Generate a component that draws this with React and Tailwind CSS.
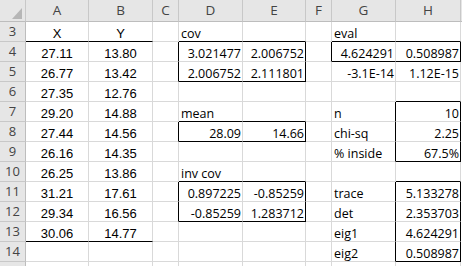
import React from "react";

const COLS = ["A", "B", "C", "D", "E", "F", "G", "H"];
const WIDTHS = ["w-[63px]", "w-[64px]", "w-[26px]", "w-[64px]", "w-[63px]", "w-[26px]", "w-[64px]", "w-[65px]"];

const DATA = {
  3: { A: ["X", "c"], B: ["Y", "c"], D: ["cov", "l"], G: ["eval", "l"] },
  4: { A: ["27.11", "c"], B: ["13.80", "c"], D: ["3.021477", "r"], E: ["2.006752", "r"], G: ["4.624291", "r"], H: ["0.508987", "r"] },
  5: { A: ["26.77", "c"], B: ["13.42", "c"], D: ["2.006752", "r"], E: ["2.111801", "r"], G: ["-3.1E-14", "r"], H: ["1.12E-15", "r"] },
  6: { A: ["27.35", "c"], B: ["12.76", "c"] },
  7: { A: ["29.20", "c"], B: ["14.88", "c"], D: ["mean", "l"], G: ["n", "l"], H: ["10", "r"] },
  8: { A: ["27.44", "c"], B: ["14.56", "c"], D: ["28.09", "r"], E: ["14.66", "r"], G: ["chi-sq", "l"], H: ["2.25", "r"] },
  9: { A: ["26.16", "c"], B: ["14.35", "c"], G: ["% inside", "l"], H: ["67.5%", "r"] },
  10: { A: ["26.25", "c"], B: ["13.86", "c"], D: ["inv cov", "l"] },
  11: { A: ["31.21", "c"], B: ["17.61", "c"], D: ["0.897225", "r"], E: ["-0.85259", "r"], G: ["trace", "l"], H: ["5.133278", "r"] },
  12: { A: ["29.34", "c"], B: ["16.56", "c"], D: ["-0.85259", "r"], E: ["1.283712", "r"], G: ["det", "l"], H: ["2.353703", "r"] },
  13: { A: ["30.06", "c"], B: ["14.77", "c"], G: ["eig1", "l"], H: ["4.624291", "r"] },
  14: { G: ["eig2", "l"], H: ["0.508987", "r"] },
  15: {},
};

const BOXES = [
  [4, 5, 3, 4],
  [8, 8, 3, 4],
  [11, 12, 3, 4],
  [4, 4, 6, 7],
  [7, 9, 7, 7],
  [11, 14, 7, 7],
];

const inBox = (r, c, b) => r >= b[0] && r <= b[1] && c >= b[2] && c <= b[3];

function edges(r, c) {
  let right = false;
  let bottom = false;
  for (const b of BOXES) {
    if (inBox(r, c, b) && r === b[1]) bottom = true;
    if (inBox(r + 1, c, b) && r + 1 === b[0]) bottom = true;
    if (inBox(r, c, b) && c === b[3]) right = true;
    if (inBox(r, c + 1, b) && c + 1 === b[2]) right = true;
  }
  if ((r === 3 || r === 13) && (c === 0 || c === 1)) bottom = true;
  return { right, bottom };
}

function Corner() {
  return (
    <div className="w-[26px] h-[22px] shrink-0 bg-[#e6e6e6] border-r border-b border-r-[#c8c8c8] border-b-[#bdbdbd] relative">
      <svg width="26" height="22" className="absolute left-0 top-0">
        <polygon points="22,8 22,19 12,19" fill="#b6b6b6" />
      </svg>
    </div>
  );
}

function Cell({ r, c }) {
  const col = COLS[c];
  const content = DATA[r][col];
  const { right, bottom } = edges(r, c);
  const rb = right ? "border-r-black" : "border-r-[#d9d9d9]";
  const bb = bottom ? "border-b-black" : "border-b-[#d9d9d9]";
  let align = "justify-start pl-[2px]";
  let font = "font-['Open_Sans',sans-serif] text-[12.5px]";
  if (content) {
    if (content[1] === "c") align = "justify-center";
    if (content[1] === "r") align = "justify-end pr-[1px]";
  }
  if (c === 0 || c === 1) font = "font-['Liberation_Sans',sans-serif] text-[13px]";
  return (
    <div className={`${WIDTHS[c]} h-[20px] shrink-0 border-r border-b ${rb} ${bb} flex items-end ${align} overflow-visible whitespace-nowrap`}>
      {content ? <span className={`${font} leading-[15px] text-black`}>{content[0]}</span> : null}
    </div>
  );
}

export default function App() {
  const rows = [3, 4, 5, 6, 7, 8, 9, 10, 11, 12, 13, 14, 15];
  return (
    <div className="w-[462px] h-[266px] overflow-hidden bg-white">
      <div className="flex">
        <Corner />
        {COLS.map((c, i) => (
          <div
            key={c}
            className={`${WIDTHS[i]} h-[22px] shrink-0 bg-[#e6e6e6] border-r border-b border-r-[#c8c8c8] border-b-[#bdbdbd] flex items-center justify-center font-['Open_Sans',sans-serif] text-[13.5px] text-[#444]`}
          >
            {c}
          </div>
        ))}
        <div className="w-[10px] h-[22px] shrink-0 bg-[#e6e6e6] border-b border-b-[#bdbdbd]" />
      </div>
      {rows.map((r) => (
        <div key={r} className="flex">
          <div className="w-[26px] h-[20px] shrink-0 bg-[#e6e6e6] border-r border-b border-r-[#bdbdbd] border-b-[#c8c8c8] flex items-center justify-center font-['Open_Sans',sans-serif] text-[13px] text-[#444]">
            {r < 15 ? r : ""}
          </div>
          {COLS.map((c, i) => (
            <Cell key={c} r={r} c={i} />
          ))}
        </div>
      ))}
    </div>
  );
}
